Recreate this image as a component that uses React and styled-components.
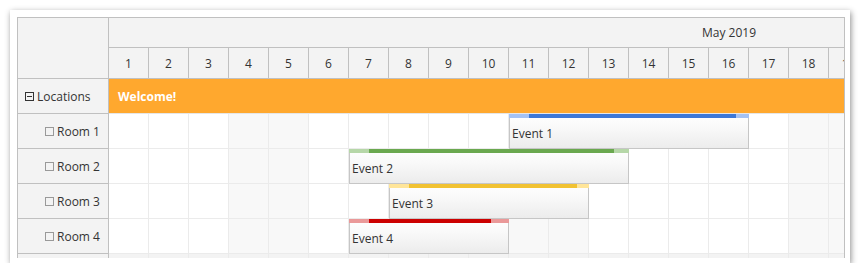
import React from "react";
import styled, { createGlobalStyle } from "styled-components";

const Global = createGlobalStyle`
  html, body { margin: 0; padding: 0; background: #fff; }
  body { font-family: "Open Sans", "Noto Sans", sans-serif; font-size: 12px; color: #333; }
`;

const MONTH_DAYS = 31;
const VISIBLE_DAYS = Array.from({ length: 19 }, (_, i) => i + 1);
const WEEKEND = new Set([4, 5, 11, 12, 18, 19, 25, 26]);
const CELL = 40;

const rooms = [
  { name: "Room 1", event: { text: "Event 1", start: 11, days: 6, lead: 20, tail: 13, dark: "#3c78d8", light: "#a4c2f4" } },
  { name: "Room 2", event: { text: "Event 2", start: 7, days: 7, lead: 20, tail: 15, dark: "#6aa84f", light: "#b6d7a8" } },
  { name: "Room 3", event: { text: "Event 3", start: 8, days: 5, lead: 20, tail: 12, dark: "#f1c232", light: "#ffe599" } },
  { name: "Room 4", event: { text: "Event 4", start: 7, days: 4, lead: 20, tail: 18, dark: "#cc0000", light: "#ea9999" } },
];

const Frame = styled.div`
  margin: 10px 0 0 10px;
  width: 840px;
  height: 253px;
  box-sizing: border-box;
  padding: 7px 5px 5px 7px;
  background: #fff;
  box-shadow: 1px 2px 6px rgba(0, 0, 0, 0.45);
`;

const Scheduler = styled.div`
  display: grid;
  grid-template-columns: 91px 1fr;
  height: 241px;
  box-sizing: border-box;
  border: 1px solid #c0c0c0;
  border-bottom: none;
  overflow: hidden;
  background: #f3f3f3;
`;

const LeftCol = styled.div`
  display: flex;
  flex-direction: column;
  border-right: 1px solid #c0c0c0;
  background: #f3f3f3;
`;

const Corner = styled.div`
  height: 61px;
  flex: none;
  box-sizing: border-box;
  border-bottom: 1px solid #c0c0c0;
`;

const RowHeader = styled.div`
  height: 35px;
  flex: none;
  box-sizing: border-box;
  border-bottom: 1px solid #c0c0c0;
  display: flex;
  align-items: center;
  padding-left: ${(p) => 7 + p.$level * 20}px;
  gap: 3px;
  color: #333;
  white-space: nowrap;
`;

const Toggle = styled.span`
  width: 9px;
  height: 9px;
  box-sizing: border-box;
  border: 1px solid ${(p) => (p.$leaf ? "#999" : "#333")};
  position: relative;
  flex: none;
  &::after {
    content: "";
    display: ${(p) => (p.$leaf ? "none" : "block")};
    position: absolute;
    left: 1px;
    right: 1px;
    top: 3px;
    height: 1px;
    background: #333;
  }
`;

const Timeline = styled.div`
  overflow: hidden;
  display: flex;
  flex-direction: column;
`;

const Track = styled.div`
  width: ${MONTH_DAYS * CELL}px;
  display: flex;
  flex-direction: column;
`;

const MonthRow = styled.div`
  height: 30px;
  box-sizing: border-box;
  border-bottom: 1px solid #c0c0c0;
  display: flex;
  align-items: center;
  justify-content: center;
  color: #333;
`;

const DayRow = styled.div`
  height: 31px;
  box-sizing: border-box;
  border-bottom: 1px solid #c0c0c0;
  display: flex;
`;

const DayCell = styled.div`
  width: ${CELL}px;
  flex: none;
  box-sizing: border-box;
  border-right: 1px solid #c0c0c0;
  display: flex;
  align-items: center;
  justify-content: center;
  color: #333;
`;

const GroupRow = styled.div`
  height: 35px;
  box-sizing: border-box;
  border-bottom: 1px solid #e6e6e6;
  background: #ffa82e;
  display: flex;
  align-items: center;
  padding-left: 9px;
  color: #fff;
  font-weight: bold;
`;

const ResRow = styled.div`
  position: relative;
  height: 35px;
  box-sizing: border-box;
  display: flex;
`;

const GridCell = styled.div`
  width: ${CELL}px;
  flex: none;
  box-sizing: border-box;
  border-right: 1px solid #ebebeb;
  border-bottom: 1px solid #ebebeb;
  background: ${(p) => (p.$weekend ? "#f8f8f8" : "#fff")};
`;

const FillerRow = styled.div`
  height: 4px;
  display: flex;
`;

const FillerCell = styled.div`
  width: ${CELL}px;
  flex: none;
  box-sizing: border-box;
  border-right: 1px solid #ebebeb;
  background: #f3f3f3;
`;

const FillerHeader = styled.div`
  height: 4px;
`;

const Event = styled.div`
  position: absolute;
  top: 0;
  height: 35px;
  box-sizing: border-box;
  border: 1px solid #c6c6c6;
  border-top: none;
  background: linear-gradient(to bottom, #ffffff 0%, #f9f9f9 40%, #ececec 100%);
  display: flex;
  flex-direction: column;
`;

const Bar = styled.div`
  height: 4px;
  margin: 0 -1px;
  flex: none;
  display: flex;
  background: ${(p) => p.$light};
`;

const BarFill = styled.div`
  height: 4px;
  background: ${(p) => p.$dark};
`;

const EventText = styled.div`
  flex: 1;
  display: flex;
  align-items: center;
  padding-left: 2px;
  color: #333;
  white-space: nowrap;
`;

export default function App() {
  return (
    <>
      <Global />
      <Frame>
        <Scheduler>
          <LeftCol>
            <Corner />
            <RowHeader $level={0}>
              <Toggle />
              Locations
            </RowHeader>
            {rooms.map((r) => (
              <RowHeader key={r.name} $level={1}>
                <Toggle $leaf />
                {r.name}
              </RowHeader>
            ))}
            <FillerHeader />
          </LeftCol>
          <Timeline>
            <Track>
              <MonthRow>May 2019</MonthRow>
              <DayRow>
                {VISIBLE_DAYS.map((d) => (
                  <DayCell key={d}>{d}</DayCell>
                ))}
              </DayRow>
              <GroupRow>Welcome!</GroupRow>
              {rooms.map((r) => {
                const e = r.event;
                const width = e.days * CELL;
                return (
                  <ResRow key={r.name}>
                    {VISIBLE_DAYS.map((d) => (
                      <GridCell key={d} $weekend={WEEKEND.has(d)} />
                    ))}
                    <Event style={{ left: (e.start - 1) * CELL, width }}>
                      <Bar $light={e.light}>
                        <BarFill
                          $dark={e.dark}
                          style={{ marginLeft: e.lead, width: width - e.lead - e.tail }}
                        />
                      </Bar>
                      <EventText>{e.text}</EventText>
                    </Event>
                  </ResRow>
                );
              })}
              <FillerRow>
                {VISIBLE_DAYS.map((d) => (
                  <FillerCell key={d} />
                ))}
              </FillerRow>
            </Track>
          </Timeline>
        </Scheduler>
      </Frame>
    </>
  );
}
